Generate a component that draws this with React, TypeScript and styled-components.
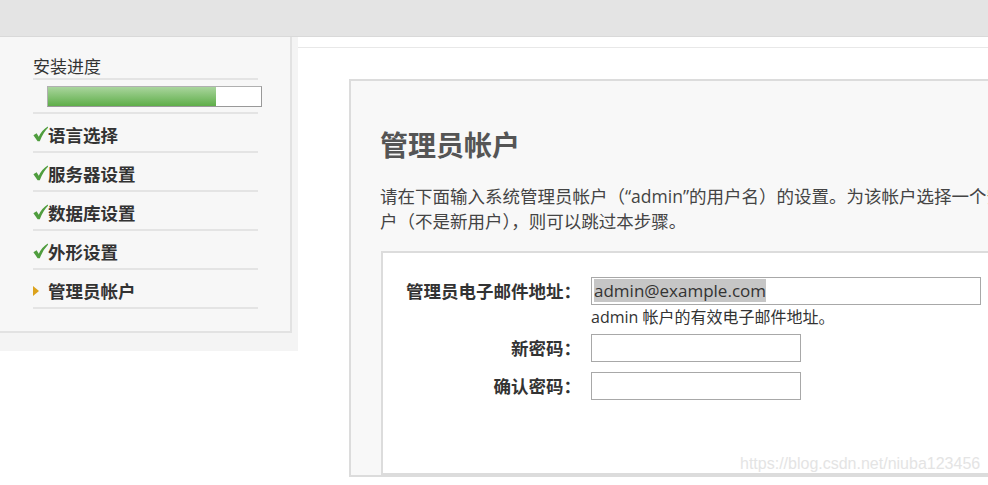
import React from 'react';
import styled, { createGlobalStyle } from 'styled-components';

const GlobalStyle = createGlobalStyle`
  html, body {
    margin: 0;
    padding: 0;
    background: #fff;
    overflow: hidden;
  }
  body {
    font-family: "Open Sans", "Noto Sans CJK SC", sans-serif;
    color: #333;
  }
`;

const Page = styled.div`
  width: 988px;
  height: 485px;
  overflow: hidden;
`;

const TopBar = styled.div`
  height: 36px;
  background: #e4e4e4;
  border-bottom: 1px solid #d9d9d9;
`;

const Body = styled.div`
  display: flex;
  align-items: flex-start;
`;

const SideWrap = styled.div`
  width: 298px;
  flex-shrink: 0;
  background: #f4f4f4;
  padding-bottom: 18px;
`;

const SideBox = styled.div`
  width: 292px;
  background: #f7f7f7;
  border-right: 2px solid #e2e2e2;
  border-bottom: 2px solid #e2e2e2;
  padding: 17px 0 22px 33px;
  box-sizing: border-box;
`;

const SideList = styled.div`
  width: 225px;
`;

const SideTitle = styled.div`
  font-family: "Noto Sans CJK SC", sans-serif;
  font-size: 17px;
  line-height: 24px;
  color: #333;
  border-bottom: 2px solid #e4e4e4;
`;

const ProgressRow = styled.div`
  padding: 6px 0 5px 14px;
  border-bottom: 2px solid #e4e4e4;
`;

const Progress = styled.div`
  width: 215px;
  height: 21px;
  box-sizing: border-box;
  background: #fff;
  border: 1px solid #b0b0b0;
  border-right-color: #999;
  border-bottom-color: #999;
`;

const ProgressFill = styled.div`
  height: 100%;
  background: linear-gradient(#a9d59d, #5fae49);
`;

const Step = styled.div`
  display: flex;
  align-items: center;
  padding-top: 4px;
  height: 33px;
  border-bottom: 2px solid #e4e4e4;
  font-family: "Noto Sans CJK SC", sans-serif;
  font-weight: 700;
  font-size: 17.5px;
  color: #333;
`;

const Mark = styled.svg`
  width: 15px;
  height: 16px;
  flex-shrink: 0;
  margin-top: -2px;
`;

const Arrow = styled.span`
  width: 0;
  height: 0;
  border-top: 5px solid transparent;
  border-bottom: 5px solid transparent;
  border-left: 6px solid #dca21c;
  margin-right: 9px;
`;

const Main = styled.div`
  flex: 1;
  min-width: 0;
  margin-top: 10px;
  background: #fff;
  border-top: 1px solid #e8e8e8;
  padding: 31px 0 0 51px;
  overflow: hidden;
`;

const Content = styled.div`
  width: 760px;
  background: #f8f8f8;
  border: 2px solid #dcdcdc;
  padding: 45px 0 0 29px;
`;

const Heading = styled.h2`
  margin: 0;
  font-family: "Noto Sans CJK SC", sans-serif;
  font-size: 28px;
  line-height: 36px;
  font-weight: 700;
  color: #555;
`;

const Intro = styled.p`
  margin: 22px 0 0;
  font-size: 17.5px;
  line-height: 24.5px;
  color: #444;
  white-space: nowrap;
`;

const FormBox = styled.div`
  position: relative;
  margin: 18px 0 0 1px;
  background: #fff;
  border: 2px solid #dcdcdc;
  height: 224px;
  padding-top: 24px;
  box-sizing: border-box;
`;

const Row = styled.div<{ $gap?: number }>`
  display: flex;
  align-items: flex-start;
  margin-top: ${p => p.$gap ?? 0}px;
`;

const Label = styled.div`
  width: 198px;
  flex-shrink: 0;
  text-align: right;
  margin-right: 10px;
  font-family: "Noto Sans CJK SC", sans-serif;
  font-weight: 700;
  font-size: 17.5px;
  line-height: 28px;
  color: #333;
`;

const Col = styled.div`
  display: flex;
  flex-direction: column;
`;

const Field = styled.div<{ $w: number }>`
  width: ${p => p.$w}px;
  height: 28px;
  box-sizing: border-box;
  border: 1px solid #a8a8a8;
  background: #fff;
  padding: 0 2px;
  font-size: 17px;
  line-height: 26px;
  color: #333;
`;

const Selected = styled.span`
  background: #c6c6c6;
`;

const Help = styled.div`
  font-size: 16px;
  line-height: 24px;
  color: #333;
`;

const Watermark = styled.div`
  position: absolute;
  left: 357px;
  bottom: 0;
  font-family: "Liberation Sans", sans-serif;
  font-size: 16px;
  color: #e4e4e4;
  white-space: nowrap;
`;

const steps = ['语言选择', '服务器设置', '数据库设置', '外形设置'];

const Check = () => (
  <Mark viewBox="0 0 15 16">
    <path d="M0.4 9.2 L3.6 7.2 L5.8 10.8 Q9 4 14.8 0.6 L15 1.8 Q10.2 6.5 6.8 15.2 L4.6 15.2 Z" fill="#4f9d3e" />
  </Mark>
);

const App: React.FC = () => {
  return (
    <Page>
      <GlobalStyle />
      <TopBar />
      <Body>
        <SideWrap>
          <SideBox>
            <SideList>
              <SideTitle>安装进度</SideTitle>
              <ProgressRow>
                <Progress>
                  <ProgressFill style={{ width: '79%' }} />
                </Progress>
              </ProgressRow>
              {steps.map(s => (
                <Step key={s}>
                  <Check />
                  {s}
                </Step>
              ))}
              <Step>
                <Arrow />
                管理员帐户
              </Step>
            </SideList>
          </SideBox>
        </SideWrap>
        <Main>
          <Content>
            <Heading>管理员帐户</Heading>
            <Intro>
              请在下面输入系统管理员帐户（“admin”的用户名）的设置。为该帐户选择一个安全的密码。如果您已经有一个管理员帐
              <br />
              户（不是新用户），则可以跳过本步骤。
            </Intro>
            <FormBox>
              <Row>
                <Label>管理员电子邮件地址：</Label>
                <Col>
                  <Field $w={390}>
                    <Selected>admin@example.com</Selected>
                  </Field>
                  <Help>admin 帐户的有效电子邮件地址。</Help>
                </Col>
              </Row>
              <Row $gap={5}>
                <Label>新密码：</Label>
                <Field $w={210} />
              </Row>
              <Row $gap={10}>
                <Label>确认密码：</Label>
                <Field $w={210} />
              </Row>
              <Watermark>https://blog.csdn.net/niuba123456</Watermark>
            </FormBox>
          </Content>
        </Main>
      </Body>
    </Page>
  );
};

export default App;
